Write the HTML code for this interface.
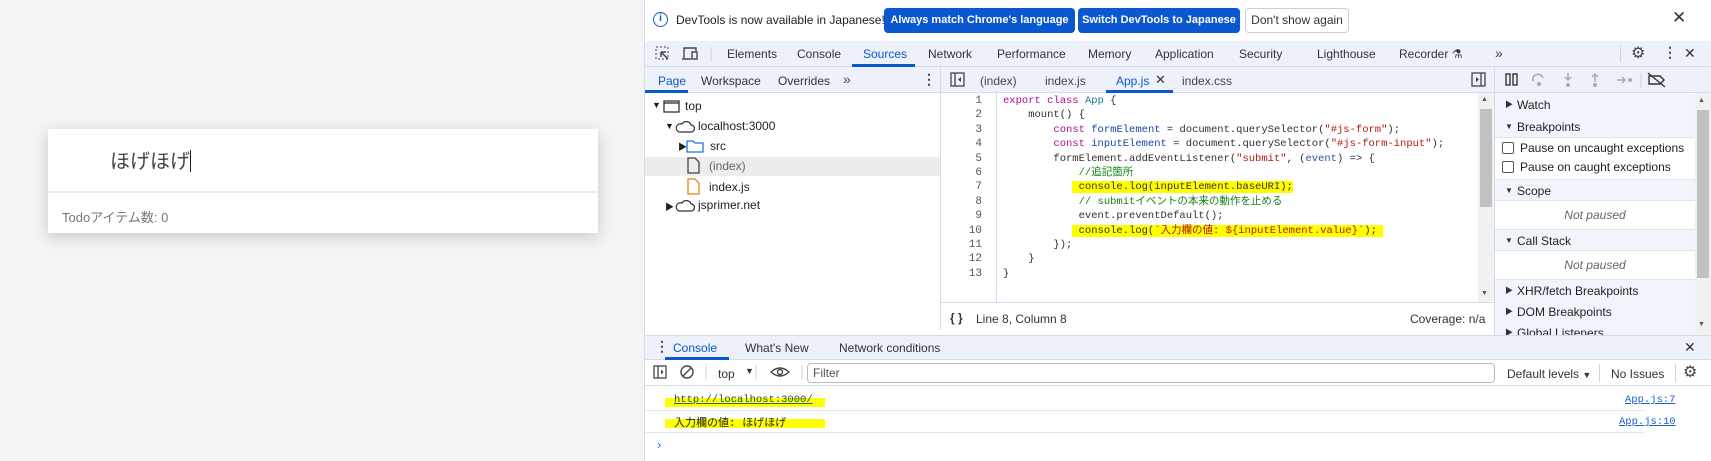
<!DOCTYPE html>
<html><head><meta charset="utf-8">
<style>
*{box-sizing:border-box;margin:0;padding:0}
body{width:1711px;height:461px;overflow:hidden;position:relative;background:#fff;font-family:"Liberation Sans","Noto Sans CJK JP",sans-serif;font-size:12px;color:#1f1f1f}
.a{position:absolute;white-space:nowrap}
.mono{font-family:"Liberation Mono","Noto Sans CJK JP",monospace;font-size:10px}
.tb{background:#edf1f9}
.c{position:absolute;white-space:pre;left:1003px;height:14.4px;line-height:14.4px;color:#303030}
.k{color:#aa0d91}.t{color:#1d7a8a}.v{color:#1a3fa6}.s{color:#b4170e}.cm{color:#168016}.p{color:#2a4fa0}
.ln{position:absolute;left:940px;width:42px;text-align:right;color:#555;height:14.4px;line-height:14.4px;font-size:11px}
.hl{background:#ffff00}
.sh{position:absolute;left:1495px;width:200px;height:22px;background:#f1f4fb;border-bottom:1px solid #dde4f2;line-height:22px;padding-left:22px}
.tri{position:absolute;left:10px;font-size:8px;color:#333}
</style></head><body>
<!-- page -->
<div class="a" style="left:0;top:0;width:645px;height:461px;background:#f4f4f4"></div>
<div class="a" style="left:48px;top:129px;width:550px;height:104px;background:#fff;box-shadow:0 4px 14px rgba(0,0,0,.18)">
 <div class="a" style="left:62px;top:16px;font-size:20px;color:#444">ほげほげ<span style="display:inline-block;width:1px;height:22px;background:#222;vertical-align:-4px"></span></div>
 <div class="a" style="left:0;top:62px;width:550px;height:2px;background:#ececec"></div>
 <div class="a" style="left:14px;top:78px;font-size:13px;color:#777">Todoアイテム数: 0</div>
</div>
<!-- devtools -->
<div class="a" style="left:644px;top:0;width:1px;height:461px;background:#d3dcee"></div>
<!-- infobar -->
<div class="a" style="left:653px;top:12px;width:15px;height:15px;border:1.5px solid #0b57d0;border-radius:50%;color:#0b57d0;font-size:10px;font-weight:bold;text-align:center;line-height:12px">i</div>
<div class="a" style="left:676px;top:13px;font-size:12px;color:#1f1f1f">DevTools is now available in Japanese!</div>
<div class="a" style="left:884px;top:8px;width:191px;height:25px;background:#0b57d0;border-radius:4px;color:#fff;font-weight:bold;font-size:11px;line-height:25px;text-align:center">Always match Chrome's language</div>
<div class="a" style="left:1078px;top:8px;width:162px;height:25px;background:#0b57d0;border-radius:4px;color:#fff;font-weight:bold;font-size:11px;line-height:25px;text-align:center">Switch DevTools to Japanese</div>
<div class="a" style="left:1245px;top:8px;width:104px;height:25px;border:1px solid #ccd;border-radius:4px;color:#333;font-size:12px;line-height:23px;text-align:center">Don't show again</div>
<div class="a" style="left:1672px;top:8px;font-size:17px;color:#333">✕</div>
<!-- main tabbar -->
<div class="a tb" style="left:645px;top:41px;width:1066px;height:26px;border-bottom:1px solid #d3dcee"></div>
<svg class="a" style="left:655px;top:45px" width="60" height="18"><rect x="1" y="2" width="12" height="12" fill="none" stroke="#444" stroke-dasharray="2 2"/><path d="M6 7 L13 14 M6 7 L6 12 M6 7 L11 7" stroke="#444" stroke-width="1.5" fill="none"/><path d="M29 13 V3 H41 V6 M27 14 H36" stroke="#444" stroke-width="1.4" fill="none"/><rect x="37" y="7" width="5" height="7" fill="none" stroke="#444" stroke-width="1.4"/><line x1="56" y1="2" x2="56" y2="17" stroke="#ccd5e8"/></svg>
<div class="a" style="left:727px;top:47px;color:#333">Elements</div>
<div class="a" style="left:797px;top:47px;color:#333">Console</div>
<div class="a" style="left:863px;top:47px;color:#0b57d0">Sources</div>
<div class="a" style="left:852px;top:64px;width:63px;height:3px;background:#0b57d0"></div>
<div class="a" style="left:928px;top:47px;color:#333">Network</div>
<div class="a" style="left:997px;top:47px;color:#333">Performance</div>
<div class="a" style="left:1088px;top:47px;color:#333">Memory</div>
<div class="a" style="left:1155px;top:47px;color:#333">Application</div>
<div class="a" style="left:1239px;top:47px;color:#333">Security</div>
<div class="a" style="left:1317px;top:47px;color:#333">Lighthouse</div>
<div class="a" style="left:1399px;top:47px;color:#333">Recorder <span style="font-size:12px">⚗</span></div>
<div class="a" style="left:1495px;top:45px;color:#444;font-size:14px">»</div>
<div class="a" style="left:1620px;top:45px;width:1px;height:17px;background:#ccd5e8"></div>
<div class="a" style="left:1631px;top:43px;font-size:16px;color:#444">⚙</div>
<div class="a" style="left:1663px;top:44px;font-size:14px;color:#444;font-weight:bold">⋮</div>
<div class="a" style="left:1684px;top:45px;font-size:14px;color:#333">✕</div>
<!-- navigator -->
<div class="a tb" style="left:645px;top:67px;width:295px;height:26px;border-bottom:1px solid #d3dcee"></div>
<div class="a" style="left:940px;top:67px;width:1px;height:263px;background:#d3dcee"></div>
<div class="a" style="left:658px;top:74px;color:#0b57d0">Page</div>
<div class="a" style="left:645px;top:90px;width:43px;height:3px;background:#0b57d0"></div>
<div class="a" style="left:701px;top:74px;color:#333">Workspace</div>
<div class="a" style="left:778px;top:74px;color:#333">Overrides</div>
<div class="a" style="left:843px;top:71px;color:#444;font-size:14px">»</div>
<div class="a" style="left:922px;top:71px;color:#444;font-size:14px;font-weight:bold">⋮</div>
<div class="a" style="left:645px;top:157px;width:295px;height:19px;background:#ededed"></div>
<div class="a" style="left:652px;top:100px;font-size:9px">▼</div>
<svg class="a" style="left:663px;top:100px" width="17" height="13"><rect x="1" y="1" width="15" height="11" fill="none" stroke="#333" stroke-width="1.3"/><line x1="1" y1="3" x2="16" y2="3" stroke="#333" stroke-width="1.3"/></svg>
<div class="a" style="left:685px;top:99px">top</div>
<div class="a" style="left:665px;top:121px;font-size:9px">▼</div>
<svg class="a" style="left:675px;top:120px" width="20" height="13"><path d="M4 12 H16 A3.5 3.5 0 0 0 16 5 A5 5 0 0 0 7 4 A4 4 0 0 0 4 12 Z" fill="none" stroke="#333" stroke-width="1.2"/></svg>
<div class="a" style="left:698px;top:119px">localhost:3000</div>
<div class="a" style="left:678px;top:140px;font-size:9px">▶</div>
<svg class="a" style="left:686px;top:139px" width="19" height="14"><path d="M1 2 H7 L9 4 H17 V13 H1 Z" fill="none" stroke="#1a73e8" stroke-width="1.3"/></svg>
<div class="a" style="left:710px;top:139px">src</div>
<svg class="a" style="left:687px;top:157px" width="14" height="17"><path d="M1 1 H8 L12 5 V16 H1 Z" fill="none" stroke="#444" stroke-width="1.3"/></svg>
<div class="a" style="left:709px;top:159px;color:#666">(index)</div>
<svg class="a" style="left:687px;top:178px" width="14" height="17"><path d="M1 1 H8 L12 5 V16 H1 Z" fill="none" stroke="#e8870e" stroke-width="1.3"/></svg>
<div class="a" style="left:709px;top:180px">index.js</div>
<div class="a" style="left:665px;top:200px;font-size:9px">▶</div>
<svg class="a" style="left:675px;top:199px" width="20" height="13"><path d="M4 12 H16 A3.5 3.5 0 0 0 16 5 A5 5 0 0 0 7 4 A4 4 0 0 0 4 12 Z" fill="none" stroke="#333" stroke-width="1.2"/></svg>
<div class="a" style="left:698px;top:198px">jsprimer.net</div>
<!-- editor tabs -->
<div class="a tb" style="left:941px;top:67px;width:554px;height:26px;border-bottom:1px solid #d3dcee"></div>
<svg class="a" style="left:950px;top:72px" width="16" height="15"><rect x="1" y="1" width="13" height="13" fill="none" stroke="#444" stroke-width="1.3"/><line x1="5" y1="1" x2="5" y2="14" stroke="#444" stroke-width="1.3"/><path d="M11 5 L8 7.5 L11 10Z" fill="#444"/></svg>
<div class="a" style="left:980px;top:74px;color:#444">(index)</div>
<div class="a" style="left:1045px;top:74px;color:#444">index.js</div>
<div class="a" style="left:1116px;top:74px;color:#0b57d0">App.js</div>
<div class="a" style="left:1155px;top:72px;color:#333;font-size:13px">✕</div>
<div class="a" style="left:1106px;top:90px;width:67px;height:3px;background:#0b57d0"></div>
<div class="a" style="left:1182px;top:74px;color:#444">index.css</div>
<svg class="a" style="left:1471px;top:72px" width="16" height="15"><rect x="1" y="1" width="13" height="13" fill="none" stroke="#444" stroke-width="1.3"/><line x1="10" y1="1" x2="10" y2="14" stroke="#444" stroke-width="1.3"/><path d="M5 5 L8 7.5 L5 10Z" fill="#444"/></svg>
<!-- code -->
<div class="a" style="left:996px;top:93px;width:1px;height:209px;background:#d3dcee"></div>
<div class="a" style="left:1478px;top:93px;width:16px;height:209px;background:#f1f1f1"></div>
<div class="a" style="left:1480px;top:109px;width:12px;height:98px;background:#c1c1c1"></div>
<div class="a" style="left:1481px;top:96px;font-size:7px;color:#555">▲</div>
<div class="a" style="left:1481px;top:290px;font-size:7px;color:#555">▼</div>
<div class="mono" style="font-size:10.5px">
<div class="ln" style="top:94px">1</div><div class="ln" style="top:108.4px">2</div><div class="ln" style="top:122.8px">3</div><div class="ln" style="top:137.2px">4</div><div class="ln" style="top:151.6px">5</div><div class="ln" style="top:166px">6</div><div class="ln" style="top:180.4px">7</div><div class="ln" style="top:194.8px">8</div><div class="ln" style="top:209.2px">9</div><div class="ln" style="top:223.6px">10</div><div class="ln" style="top:238px">11</div><div class="ln" style="top:252.4px">12</div><div class="ln" style="top:266.8px">13</div>
<div class="c" style="top:94px"><span class="k">export class</span> <span class="t">App</span> {</div>
<div class="c" style="top:108.4px">    mount() {</div>
<div class="c" style="top:122.8px">        <span class="k">const</span> <span class="v">formElement</span> = document.querySelector(<span class="s">"#js-form"</span>);</div>
<div class="c" style="top:137.2px">        <span class="k">const</span> <span class="v">inputElement</span> = document.querySelector(<span class="s">"#js-form-input"</span>);</div>
<div class="c" style="top:151.6px">        formElement.addEventListener(<span class="s">"submit"</span>, (<span class="p">event</span>) =&gt; {</div>
<div class="c" style="top:166px">            <span class="cm">//追記箇所</span></div>
<div class="c" style="top:180.4px">           <span class="hl"> console.log(inputElement.baseURI);</span></div>
<div class="c" style="top:194.8px">            <span class="cm">// submitイベントの本来の動作を止める</span></div>
<div class="c" style="top:209.2px">            event.preventDefault();</div>
<div class="c" style="top:223.6px">           <span class="hl"> console.log(<span class="s">`入力欄の値: ${inputElement.value}`</span>); </span></div>
<div class="c" style="top:238px">        });</div>
<div class="c" style="top:252.4px">    }</div>
<div class="c" style="top:266.8px">}</div>
</div>
<!-- status bar -->
<div class="a" style="left:941px;top:302px;width:554px;height:1px;background:#d3dcee"></div>
<div class="a" style="left:950px;top:311px;font-weight:bold;color:#333">{ }</div>
<div class="a" style="left:976px;top:312px;color:#333">Line 8, Column 8</div>
<div class="a" style="left:1410px;top:312px;color:#333">Coverage: n/a</div>
<!-- debugger sidebar -->
<div class="a" style="left:1494px;top:67px;width:1px;height:268px;background:#d3dcee"></div>
<div class="a tb" style="left:1495px;top:67px;width:216px;height:26px;border-bottom:1px solid #d3dcee"></div>
<svg class="a" style="left:1503px;top:71px" width="170" height="18"><rect x="3" y="3" width="4" height="11" fill="none" stroke="#333" stroke-width="1.4"/><rect x="10" y="3" width="4" height="11" fill="none" stroke="#333" stroke-width="1.4"/><path d="M30 10 A5 5 0 0 1 40 7" stroke="#aaa" stroke-width="1.6" fill="none"/><circle cx="36" cy="13" r="2" fill="#aaa"/><path d="M65 2 V9 M62 6 L65 9 L68 6" stroke="#aaa" stroke-width="1.5" fill="none"/><circle cx="65" cy="14" r="2" fill="#aaa"/><path d="M92 11 V3 M89 6 L92 3 L95 6" stroke="#aaa" stroke-width="1.5" fill="none"/><circle cx="92" cy="14" r="2" fill="#aaa"/><path d="M114 9 H122 M119 6 L122 9 L119 12" stroke="#aaa" stroke-width="1.5" fill="none"/><circle cx="127" cy="9" r="2" fill="#aaa"/><line x1="138" y1="2" x2="138" y2="17" stroke="#ccd5e8"/><path d="M146 5 H157 L161 9 L157 13 H146 Z" fill="none" stroke="#333" stroke-width="1.4"/><line x1="145" y1="2" x2="162" y2="16" stroke="#333" stroke-width="1.4"/></svg>
<div class="a" style="left:1495px;top:93px;width:200px;height:242px;background:#fff"></div>
<div class="sh" style="top:94px;border-bottom:none"><span class="tri">▶</span>Watch</div>
<div class="sh" style="top:116px"><span class="tri">▼</span>Breakpoints</div>
<div class="a" style="left:1502px;top:142px;width:12px;height:12px;border:1px solid #555;border-radius:2px"></div>
<div class="a" style="left:1520px;top:141px">Pause on uncaught exceptions</div>
<div class="a" style="left:1502px;top:161px;width:12px;height:12px;border:1px solid #555;border-radius:2px"></div>
<div class="a" style="left:1520px;top:160px">Pause on caught exceptions</div>
<div class="sh" style="top:179px;border-top:1px solid #dde4f2"><span class="tri">▼</span>Scope</div>
<div class="a" style="left:1495px;top:208px;width:200px;text-align:center;font-style:italic;color:#666">Not paused</div>
<div class="sh" style="top:229px;border-top:1px solid #dde4f2"><span class="tri">▼</span>Call Stack</div>
<div class="a" style="left:1495px;top:258px;width:200px;text-align:center;font-style:italic;color:#666">Not paused</div>
<div class="sh" style="top:279px;border-top:1px solid #dde4f2;border-bottom:none"><span class="tri">▶</span>XHR/fetch Breakpoints</div>
<div class="sh" style="top:301px;border-bottom:none"><span class="tri">▶</span>DOM Breakpoints</div>
<div class="sh" style="top:323px;border-bottom:none;height:12px;overflow:hidden;line-height:20px"><span class="tri">▶</span>Global Listeners</div>
<div class="a" style="left:1695px;top:93px;width:16px;height:242px;background:#f1f1f1"></div>
<div class="a" style="left:1697px;top:110px;width:12px;height:168px;background:#c1c1c1"></div>
<div class="a" style="left:1698px;top:97px;font-size:7px;color:#555">▲</div>
<div class="a" style="left:1698px;top:321px;font-size:7px;color:#555">▼</div>
<!-- drawer -->
<div class="a tb" style="left:645px;top:335px;width:1066px;height:25px;border-top:1px solid #d3dcee;border-bottom:1px solid #d3dcee"></div>
<div class="a" style="left:655px;top:338px;font-size:14px;color:#444;font-weight:bold">⋮</div>
<div class="a" style="left:673px;top:341px;color:#0b57d0">Console</div>
<div class="a" style="left:665px;top:357px;width:64px;height:3px;background:#0b57d0"></div>
<div class="a" style="left:745px;top:341px;color:#333">What's New</div>
<div class="a" style="left:839px;top:341px;color:#333">Network conditions</div>
<div class="a" style="left:1684px;top:339px;font-size:14px;color:#333">✕</div>
<!-- console toolbar -->
<div class="a" style="left:645px;top:385px;width:1066px;height:1px;background:#d3dcee"></div>
<svg class="a" style="left:653px;top:364px" width="170" height="18"><rect x="1" y="2" width="12" height="12" fill="none" stroke="#444" stroke-width="1.3"/><line x1="5" y1="2" x2="5" y2="14" stroke="#444" stroke-width="1.3"/><path d="M8 5.5 L10.5 8 L8 10.5Z" fill="#444"/><circle cx="34" cy="8" r="6" fill="none" stroke="#444" stroke-width="1.4"/><line x1="30" y1="12" x2="38" y2="4" stroke="#444" stroke-width="1.4"/><line x1="53" y1="1" x2="53" y2="16" stroke="#ccd5e8"/><line x1="103" y1="1" x2="103" y2="16" stroke="#ccd5e8"/><path d="M118 8 Q127 0 136 8 Q127 16 118 8Z" fill="none" stroke="#444" stroke-width="1.4"/><circle cx="127" cy="8" r="2.5" fill="none" stroke="#444" stroke-width="1.4"/><line x1="149" y1="1" x2="149" y2="16" stroke="#ccd5e8"/></svg>
<div class="a" style="left:718px;top:367px;color:#333">top</div>
<div class="a" style="left:745px;top:366px;font-size:9px;color:#333">▼</div>
<div class="a" style="left:807px;top:363px;width:688px;height:20px;border:1px solid #bbb;border-radius:4px;padding-left:5px;line-height:18px;color:#555">Filter</div>
<div class="a" style="left:1507px;top:367px;color:#333">Default levels <span style="font-size:9px">▼</span></div>
<div class="a" style="left:1599px;top:364px;width:1px;height:18px;background:#ccd5e8"></div>
<div class="a" style="left:1611px;top:367px;color:#333">No Issues</div>
<div class="a" style="left:1675px;top:364px;width:1px;height:18px;background:#ccd5e8"></div>
<div class="a" style="left:1683px;top:362px;font-size:16px;color:#444">⚙</div>
<!-- messages -->
<div class="a" style="left:665px;top:398px;width:160px;height:9px;background:#ffff00"></div>
<div class="a mono" style="left:674px;top:394px;font-size:10.5px;color:#2b4a22;text-decoration:underline;text-decoration-color:#1a5fd0">http://localhost:3000/</div>
<div class="a mono" style="left:1625px;top:394px;font-size:10.5px;color:#1a5fd0;text-decoration:underline">App.js:7</div>
<div class="a" style="left:645px;top:410px;width:1000px;height:1px;background:#dfe6f4"></div>
<div class="a" style="left:665px;top:419px;width:160px;height:9px;background:#ffff00"></div>
<div class="a mono" style="left:674px;top:414px;font-size:11px;color:#222">入力欄の値: ほげほげ</div>
<div class="a mono" style="left:1619px;top:416px;font-size:10.5px;color:#1a5fd0;text-decoration:underline">App.js:10</div>
<div class="a" style="left:645px;top:432px;width:1000px;height:1px;background:#dfe6f4"></div>
<div class="a" style="left:657px;top:437px;color:#1a73e8;font-size:13px">›</div>
</body></html>
